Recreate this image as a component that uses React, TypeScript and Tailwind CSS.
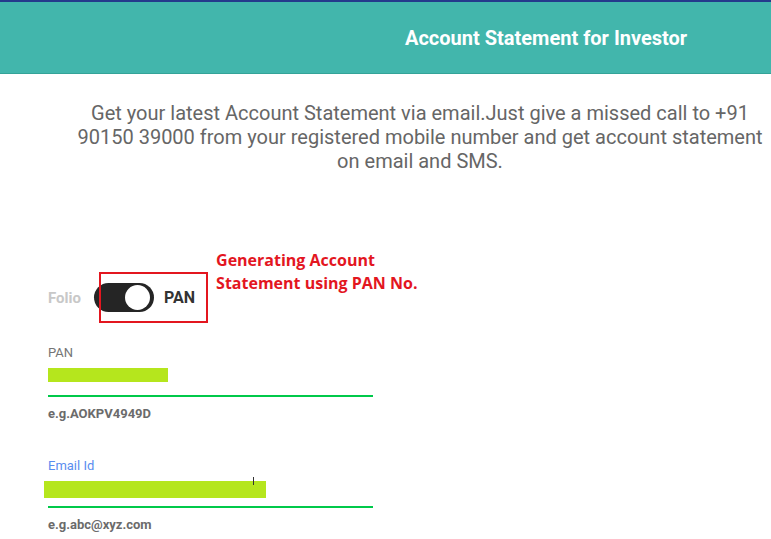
import React from "react";

export default function App() {
  return (
    <div className="w-[771px] h-[539px] overflow-hidden bg-white font-['Roboto',sans-serif]">
      {/* Header */}
      <div className="h-[2px] bg-[#243a8c]" />
      <div className="h-[72px] bg-[#42b6ac] border-b border-[#34a398] flex items-center">
        <h1 className="ml-[405px] text-[20px] font-bold text-white whitespace-nowrap">
          Account Statement for Investor
        </h1>
      </div>

      {/* Intro */}
      <p className="ml-[75px] w-[690px] mt-[27px] text-center text-[20px] leading-[24px] text-[#666666]">
        Get your latest Account Statement via email.Just give a missed call to +91 90150 39000 from your registered mobile number and get account statement on email and SMS.
      </p>

      {/* Toggle row */}
      <div className="mt-[76px] ml-[48px] flex items-start">
        <span className="w-[46px] mt-[40px] text-[15px] leading-[18px] font-bold text-[#c8c8c8]">Folio</span>
        <div className="mt-[34px] relative">
          <div className="flex items-center">
            <div className="w-[60px] h-[29px] rounded-full bg-[#252525] flex items-center justify-end pr-[4px]">
              <div className="w-[25px] h-[25px] rounded-full bg-white" />
            </div>
            <span className="ml-[10px] text-[16px] font-bold text-[#333333]">PAN</span>
          </div>
          <div className="absolute left-[5px] top-[-11px] w-[109px] h-[51px] border-2 border-[#e3161f]" />
        </div>
        <div className="ml-[21px] text-[16px] leading-[23px] font-bold text-[#e3161f] font-['Open_Sans',sans-serif]">
          <div>Generating Account</div>
          <div>Statement using PAN No.</div>
        </div>
      </div>

      {/* PAN field */}
      <div className="ml-[48px] mt-[33px] w-[325px]">
        <label className="block text-[13px] text-[#757575] leading-[16px]">PAN</label>
        <div className="mt-[7px] h-[14px] w-[120px] bg-[#b5e61d]" />
        <div className="mt-[13px] h-[2px] bg-[#00c94a]" />
        <div className="mt-[7px] text-[13px] font-bold text-[#6b6b6b]">e.g.AOKPV4949D</div>
      </div>

      {/* Email field */}
      <div className="ml-[48px] mt-[34px] w-[325px]">
        <label className="block text-[13px] text-[#5a8def] leading-[16px]">Email Id</label>
        <div className="relative mt-[7px] h-[18px]">
          <div className="absolute left-[-4px] top-[0px] h-[17px] w-[222px] bg-[#b5e61d]" />
          <div className="absolute left-[205px] top-[-4px] h-[8px] w-px bg-[#333333]" />
        </div>
        <div className="mt-[7px] h-[2px] bg-[#00c94a]" />
        <div className="mt-[7px] text-[13px] font-bold text-[#6b6b6b]">e.g.abc@xyz.com</div>
      </div>
    </div>
  );
}
